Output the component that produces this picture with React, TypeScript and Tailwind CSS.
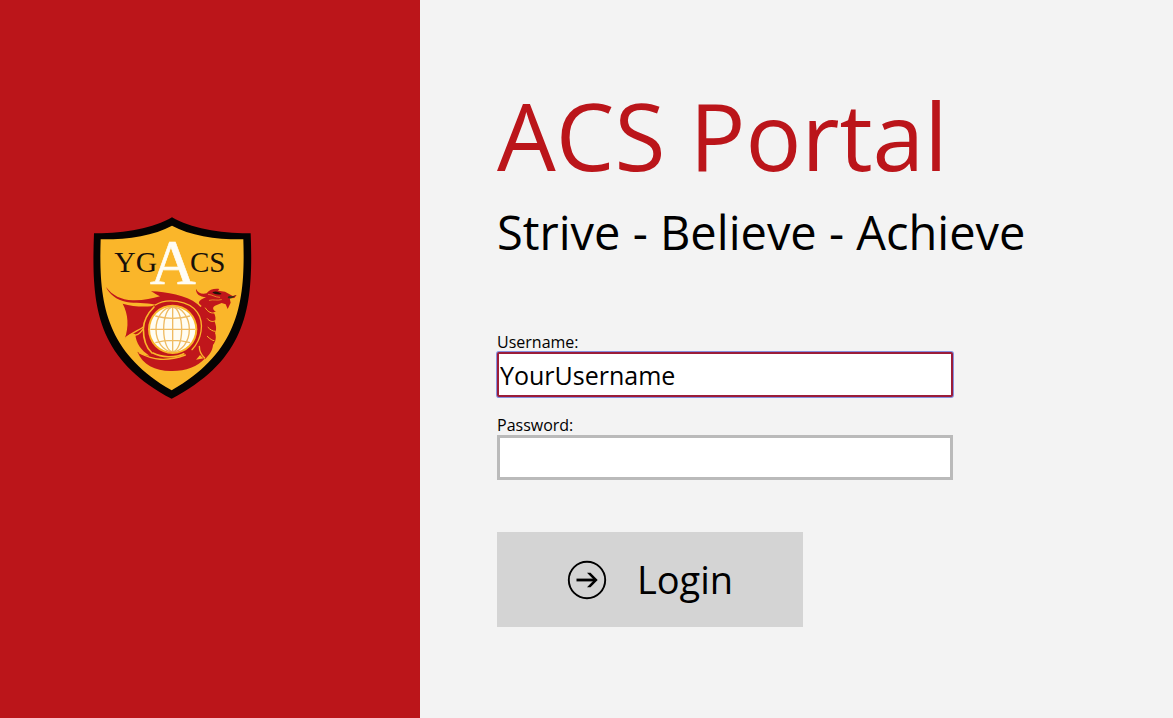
import { useState } from "react";

function Crest() {
  return (
    <svg viewBox="0 0 552 615" className="h-[205px] w-[184px]" role="img" aria-label="YGACS crest">
      <path
        d="M276 37C220 70 130 86 42 85C34 300 46 460 275 581C506 460 520 300 512 85C424 86 332 70 276 37Z"
        fill="#050303"
      />
      <path
        d="M276 62C222 92 140 104 62 103C56 290 74 440 275 556C478 440 496 290 490 103C412 104 330 92 276 62Z"
        fill="#fab62a"
      />
      <g fontFamily="'Liberation Serif', serif">
        <text x="103" y="202" fontSize="89" fill="#17100a">YG</text>
        <text x="330" y="202" fontSize="87" fill="#17100a">CS</text>
        <text x="210" y="236" fontSize="190" fill="#fffdf5" stroke="#fffdf5" strokeWidth="2">A</text>
      </g>
      <g fill="#c0161b">
        <path d="M78 246C98 272 122 284 158 286C190 287 216 280 240 274C232 270 222 264 213 259C260 261 318 270 352 297C375 316 384 340 382 373C382 420 366 447 348 464L376 459C352 486 315 499 272 498C225 497 188 479 172 440C186 449 196 452 208 452C184 437 168 416 166 388C158 382 145 388 134 402C147 365 145 328 128 296C154 304 184 306 214 304L228 299C194 292 166 296 140 291C108 284 88 268 78 246Z" />
        <path d="M348 251C353 264 366 269 380 265C388 254 402 250 418 252L414 257L435 260L446 266L458 273L470 270L463 279L449 280L452 293L443 312L437 298L425 294L405 302C395 308 400 316 408 320L401 322C406 332 409 342 404 350C408 360 411 373 405 384C410 397 407 410 399 420C398 437 387 450 375 463C357 452 350 438 348 415L344 320L365 303C356 296 354 292 361 286C366 280 373 280 378 276C360 276 347 267 348 251Z" />
      </g>
      <g fill="none" stroke="#fab62a" strokeLinecap="round">
        <path d="M226 300C260 278 326 286 352 322C374 354 365 404 336 434" strokeWidth="4" />
        <path d="M222 306C200 328 191 350 190 371C190 403 198 428 216 444" strokeWidth="5" />
        <path d="M134 401C154 384 174 377 190 366" strokeWidth="4" />
        <path d="M157 392C170 391 178 389 188 374" strokeWidth="4" />
        <path d="M178 444C220 465 258 471 316 450" strokeWidth="4" />
        <path d="M219 444C244 457 284 460 311 446" strokeWidth="5" />
        <path d="M358 424C358 440 362 449 374 459" strokeWidth="4" />
        <path d="M382 341C389 350 398 351 404 348M384 367C391 375 399 379 406 379M382 394C390 402 398 407 402 407M376 309C382 318 390 325 401 324" strokeWidth="3" />
        <path d="M385 268C398 269 405 277 419 277M388 286C401 282 411 288 424 284" strokeWidth="2" />
      </g>
      <path d="M397 262C405 257 417 259 425 267C415 270 404 269 397 262Z" fill="#201308" />
      <path d="M443 279C452 282 459 279 469 270C462 274 454 275 446 273Z" fill="#343316" />
      <circle cx="278" cy="373" r="77" fill="#c0161b" />
      <circle cx="278" cy="373" r="74" fill="#fab62a" />
      <circle cx="278" cy="373" r="68" fill="#fffdf3" />
      <g fill="none" stroke="#efbb62" strokeWidth="4">
        <path d="M211 373H345M278 306V440M226 333C259 342 297 342 330 333M226 413C259 404 297 404 330 413" />
        <ellipse cx="278" cy="373" rx="27" ry="67" />
        <ellipse cx="278" cy="373" rx="50" ry="67" />
      </g>
    </svg>
  );
}

function ArrowCircle() {
  return (
    <svg viewBox="0 0 40 40" className="size-10" fill="none" stroke="currentColor" aria-hidden="true">
      <circle cx="20" cy="20" r="18.2" strokeWidth="1.9" />
      <path d="M9.5 20H28" strokeWidth="2.8" />
      <path d="M20 12.8H23.5L30.7 20L23.5 27.2H20L27 20Z" fill="currentColor" stroke="none" />
    </svg>
  );
}

const field = "block h-[45px] w-full bg-white text-[25px] text-black outline-none";

export default function App() {
  const [username, setUsername] = useState("YourUsername");
  const [password, setPassword] = useState("");

  return (
    <div className="flex min-h-screen bg-[#f3f3f3] font-['Open_Sans','Noto_Sans',sans-serif] text-black">
      <aside className="w-[420px] shrink-0 bg-[#bb151a] pt-[205px] pl-20">
        <Crest />
      </aside>
      <main className="min-w-0 flex-1 pt-[75px] pl-[77px]">
        <h1 className="text-[93px] leading-[120px] whitespace-nowrap text-[#bb151a]">ACS Portal</h1>
        <p className="mt-[5px] text-[47px] leading-16 whitespace-nowrap">Strive - Believe - Achieve</p>
        <form className="mt-[68px] w-[456px]" onSubmit={(e) => e.preventDefault()}>
          <label htmlFor="username" className="block text-base leading-5">
            Username:
          </label>
          <input
            id="username"
            value={username}
            onChange={(e) => setUsername(e.target.value)}
            className={`${field} rounded-xs border-2 border-[#9b1c38] px-px ring-1 ring-[#8790df]`}
          />
          <label htmlFor="password" className="mt-[18px] block text-base leading-5">
            Password:
          </label>
          <input
            id="password"
            type="password"
            value={password}
            onChange={(e) => setPassword(e.target.value)}
            className={`${field} border-3 border-[#bababa]`}
          />
          <button
            type="submit"
            className="mt-[52px] flex h-[95px] w-[306px] items-center justify-center gap-[30px] bg-[#d4d4d4] text-[38px]"
          >
            <ArrowCircle />
            Login
          </button>
        </form>
      </main>
    </div>
  );
}
